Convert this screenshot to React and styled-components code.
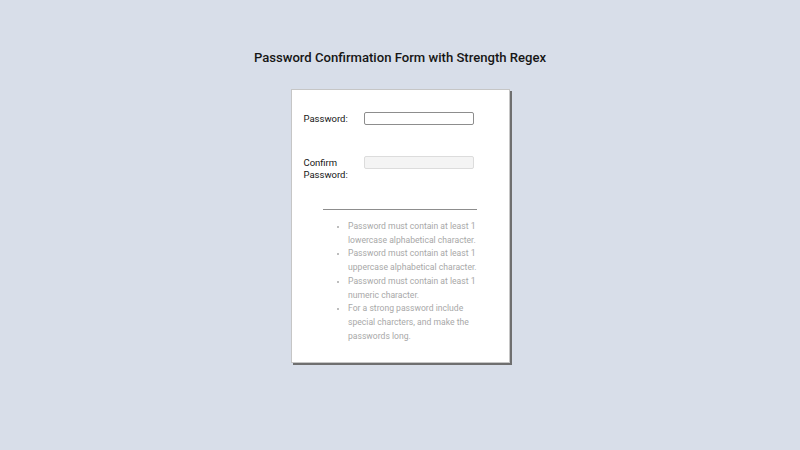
import React from "react";
import styled, { createGlobalStyle } from "styled-components";

const Global = createGlobalStyle`
  html, body { margin: 0; padding: 0; }
  body {
    background: #d8dee9;
    font-family: Roboto, "Noto Sans", sans-serif;
    color: #111;
  }
`;

const Page = styled.main`
  width: 800px;
  height: 450px;
  display: flex;
  flex-direction: column;
  align-items: center;
  padding-top: 48px;
  box-sizing: border-box;
`;

const Title = styled.h1`
  margin: 0 0 21px;
  font-size: 13.1px;
  font-weight: 500;
  line-height: 20px;
  color: #161616;
`;

const Card = styled.form`
  width: 219px;
  box-sizing: border-box;
  background: #fff;
  border: 1px solid #c6c6c6;
  box-shadow: 2px 2px 0 #6f6f6f;
  padding: 22px 12px 19px;
  display: flex;
  flex-direction: column;
  align-items: center;
`;

const Row = styled.div`
  width: 100%;
  display: grid;
  grid-template-columns: 60px 1fr;
  align-items: start;
  margin-bottom: ${(p) => p.$gap}px;
`;

const Label = styled.label`
  font-size: 9.5px;
  line-height: 11.5px;
  color: #161616;
  padding-top: 1px;
  width: 50px;
`;

const Input = styled.input`
  width: 110px;
  height: 13px;
  box-sizing: border-box;
  margin: 0;
  padding: 0 3px;
  border: 1px solid ${(p) => (p.disabled ? "#dcdcdc" : "#8d8d8d")};
  border-radius: 2px;
  background: ${(p) => (p.disabled ? "#f4f4f4" : "#fff")};
  font-size: 9px;
  outline: none;
`;

const Divider = styled.hr`
  width: 154px;
  margin: 0;
  border: 0;
  border-top: 1px solid #8d8d8d;
`;

const Rules = styled.ul`
  width: 154px;
  box-sizing: border-box;
  margin: 10px 0 0;
  padding-left: 25px;
  font-size: 8.6px;
  line-height: 13.7px;
  color: #a8a8a8;
  li::marker { font-size: 7px; }
`;

export default function App() {
  return (
    <>
      <Global />
      <Page>
        <Title>Password Confirmation Form with Strength Regex</Title>
        <Card onSubmit={(e) => e.preventDefault()}>
          <Row $gap={31}>
            <Label htmlFor="pw">Password:</Label>
            <Input id="pw" type="password" />
          </Row>
          <Row $gap={29}>
            <Label htmlFor="pw2">Confirm Password:</Label>
            <Input id="pw2" type="password" disabled />
          </Row>
          <Divider />
          <Rules>
            <li>Password must contain at least 1 lowercase alphabetical character.</li>
            <li>Password must contain at least 1 uppercase alphabetical character.</li>
            <li>Password must contain at least 1 numeric character.</li>
            <li>For a strong password include special charcters, and make the passwords long.</li>
          </Rules>
        </Card>
      </Page>
    </>
  );
}
